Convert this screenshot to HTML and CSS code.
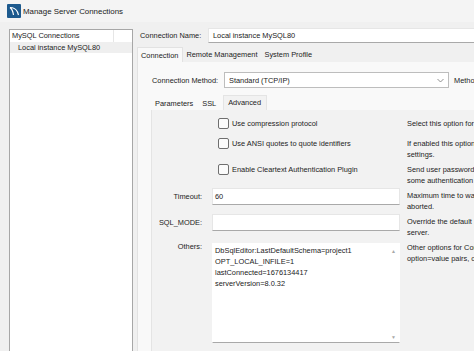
FILE: index.html
```html
<!DOCTYPE html>
<html>
<head>
    <title>Manage Server Connections</title>
    <link rel="stylesheet" href="styles.css">
</head>
<body>
    <div class="window">
        <div class="titlebar">
            <svg class="app-icon" width="14" height="14" viewBox="0 0 14 14">
                <rect x="0" y="0" width="14" height="14" rx="1" fill="#1d5a8e"/>
                <path d="M3 3.5 C6 3.5 9 5 10.5 8 L11.5 11 M3 3.5 C5 5 6 7.5 6.5 11" stroke="#ffffff" stroke-width="1.2" fill="none"/>
            </svg>
            <span class="title">Manage Server Connections</span>
        </div>
        <div class="main">
            <div class="sidebar">
                <div class="tree-head">
                    <span class="col1">MySQL Connections</span>
                    <span class="col2"></span>
                </div>
                <div class="tree-row selected">Local instance MySQL80</div>
            </div>
            <div class="content">
                <div class="name-row">
                    <label class="name-label">Connection Name:</label>
                    <div class="field name-field">Local instance MySQL80</div>
                </div>
                <div class="tabs">
                    <div class="tab active">Connection</div>
                    <div class="tab">Remote Management</div>
                    <div class="tab">System Profile</div>
                </div>
                <div class="tab-panel">
                    <div class="method-row">
                        <label class="method-label">Connection Method:</label>
                        <div class="select">
                            <span>Standard (TCP/IP)</span>
                            <svg class="chevron" width="7" height="5" viewBox="0 0 7 5">
                                <path d="M0.5 1 L3.5 4 L6.5 1" stroke="#777777" stroke-width="0.8" fill="none"/>
                            </svg>
                        </div>
                        <span class="method-note">Method to use to connect to the RDBMS</span>
                    </div>
                    <div class="subtabs">
                        <div class="subtab">Parameters</div>
                        <div class="subtab">SSL</div>
                        <div class="subtab active">Advanced</div>
                    </div>
                    <div class="sub-panel">
                        <div class="adv-grid">
                            <div class="lbl"></div>
                            <div class="check"><span class="box"></span>Use compression protocol</div>
                            <div class="desc">Select this option for WAN connections.</div>

                            <div class="lbl"></div>
                            <div class="check"><span class="box"></span>Use ANSI quotes to quote identifiers</div>
                            <div class="desc">If enabled this option overrides the serverside<br>settings.</div>

                            <div class="lbl"></div>
                            <div class="check"><span class="box"></span>Enable Cleartext Authentication Plugin</div>
                            <div class="desc">Send user password in cleartext. Required for<br>some authentication methods.</div>

                            <div class="lbl mid">Timeout:</div>
                            <div class="field input">60</div>
                            <div class="desc shift">Maximum time to wait before a connection is<br>aborted.</div>

                            <div class="lbl mid">SQL_MODE:</div>
                            <div class="field input"></div>
                            <div class="desc shift">Override the default SQL_MODE used by the<br>server.</div>

                            <div class="lbl top">Others:</div>
                            <div class="field textarea">
                                <div class="text-lines">DbSqlEditor:LastDefaultSchema=project1<br>OPT_LOCAL_INFILE=1<br>lastConnected=1676134417<br>serverVersion=8.0.32</div>
                                <div class="scrollbar">
                                    <span class="arrow">&#9650;</span>
                                    <span class="arrow">&#9660;</span>
                                </div>
                            </div>
                            <div class="desc">Other options for Connector/C++ as<br>option=value pairs, one per line.</div>
                        </div>
                    </div>
                </div>
            </div>
        </div>
    </div>
</body>
</html>
```

FILE: styles.css
```css
body {
    margin: 0;
    width: 474px;
    height: 351px;
    overflow: hidden;
    background-color: #f0f0f0;
    font-family: "Liberation Sans", Arial, sans-serif;
    font-size: 7.4px;
    color: #222222;
}
.window {
    width: 474px;
    height: 351px;
    overflow: hidden;
}
.titlebar {
    height: 22px;
    display: flex;
    align-items: center;
    background-color: #f4f4f4;
}
.app-icon {
    margin-left: 7px;
    margin-top: -1px;
}
.title {
    margin-left: 2px;
    font-size: 7.9px;
    color: #222222;
}
.main {
    display: flex;
    padding-top: 7px;
}
.sidebar {
    margin-left: 9px;
    width: 122px;
    height: 330px;
    background-color: #ffffff;
    border: 1px solid #a7a7a7;
    flex-shrink: 0;
}
.tree-head {
    display: flex;
    height: 12px;
    line-height: 12px;
}
.tree-head .col1 {
    width: 101px;
    padding-left: 2px;
    border-right: 1px solid #e6e6e6;
}
.tree-row {
    height: 11px;
    line-height: 11px;
    padding-left: 8px;
}
.tree-row.selected {
    background-color: #efefef;
}
.content {
    margin-left: 4px;
    margin-top: -1px;
    flex: 1;
    min-width: 0;
}
.name-row {
    display: flex;
    height: 15px;
    align-items: center;
}
.name-label {
    width: 68px;
    padding-left: 3px;
    flex-shrink: 0;
}
.field {
    background-color: #ffffff;
    border: 1px solid #e6e6e6;
    border-bottom-color: #a9a9a9;
    box-sizing: border-box;
}
.name-field {
    flex: 1;
    height: 15px;
    line-height: 13px;
    padding-left: 4px;
    margin-right: -10px;
}
.tabs {
    display: flex;
    margin-top: 4px;
    height: 15px;
}
.tab {
    padding: 0 4px 0 3px;
    line-height: 15px;
}
.tab.active {
    background-color: #f9f9f9;
    border: 1px solid #e2e2e2;
    border-bottom: none;
    line-height: 13px;
    padding-top: 1px;
}
.tab-panel {
    background-color: #f9f9f9;
    padding: 10px 0 0 13px;
    height: 300px;
    border-left: 1px solid #e2e2e2;
    box-sizing: border-box;
}
.method-row {
    display: flex;
    align-items: center;
    height: 16px;
    white-space: nowrap;
}
.method-label {
    width: 72px;
    padding-left: 1px;
    flex-shrink: 0;
}
.select {
    width: 225px;
    height: 16px;
    flex-shrink: 0;
    box-sizing: border-box;
    background-color: #ffffff;
    border: 1px solid #bdbdbd;
    display: flex;
    align-items: center;
    justify-content: space-between;
    padding: 0 4px 0 4px;
}
.method-note {
    margin-left: 5px;
}
.subtabs {
    display: flex;
    margin-top: 7px;
    height: 15px;
}
.subtab {
    padding: 0 5px 0 4px;
    line-height: 17px;
}
.subtab.active {
    margin-left: 2px;
    background-color: #f2f2f2;
    border: 1px solid #e4e4e4;
    border-bottom: none;
    line-height: 13px;
    padding-top: 0;
}
.sub-panel {
    background-color: #f2f2f2;
    height: 260px;
    border-left: 1px solid #e4e4e4;
}
.adv-grid {
    display: grid;
    grid-template-columns: 51px 188px auto;
    grid-template-rows: 20px 26px 24px 26px 28px 101px;
    column-gap: 10px;
    padding-top: 8px;
    white-space: nowrap;
    margin-left: -1px;
}
.lbl {
    text-align: right;
}
.lbl.mid {
    align-self: start;
    height: 17px;
    line-height: 17px;
}
.lbl.top {
    line-height: 11px;
    margin-top: -1px;
}
.check {
    display: flex;
    align-items: center;
    height: 11px;
    padding-left: 6px;
}
.box {
    width: 9px;
    height: 9px;
    border: 1px solid #6f6f6f;
    border-radius: 2px;
    background-color: #fbfbfb;
    margin-right: 3px;
}
.desc {
    line-height: 11px;
    margin-left: -3px;
}
.desc.shift {
    padding-top: 2px;
}
.input {
    height: 17px;
    line-height: 15px;
    padding-left: 2px;
}
.textarea {
    height: 100px;
    margin-top: 1px;
    display: flex;
    border-color: #ffffff;
    border-bottom-color: #a9a9a9;
}
.text-lines {
    flex: 1;
    padding: 1px 0 0 2px;
    line-height: 11px;
}
.scrollbar {
    width: 11px;
    display: flex;
    flex-direction: column;
    justify-content: space-between;
    align-items: center;
    padding: 4px 0 2px;
}
.arrow {
    font-size: 5px;
    color: #a8a8a8;
}
```
